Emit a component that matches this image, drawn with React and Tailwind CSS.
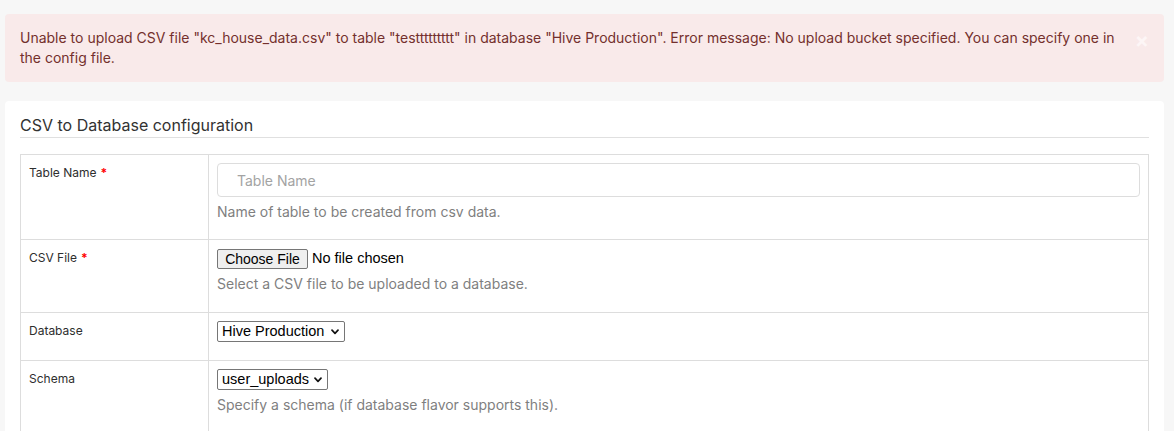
import React from "react";

const Chevron = () => (
  <svg width="8" height="6" viewBox="0 0 8 6" className="shrink-0">
    <path d="M1 1.2 L4 4.3 L7 1.2" fill="none" stroke="#111" strokeWidth="1.7" strokeLinecap="round" strokeLinejoin="round" />
  </svg>
);

const Select = ({ value, width }) => (
  <div
    className={`flex h-[21px] items-center justify-between rounded-[2px] border border-[#767676] bg-white pl-[4px] pr-[5px] font-['Liberation_Sans',Arial,sans-serif] text-[14.5px] leading-none text-black ${width}`}
  >
    <span>{value}</span>
    <Chevron />
  </div>
);

const Label = ({ children, required }) => (
  <div className="w-[188px] shrink-0 border-r border-[#dddddd] p-[8px] text-[12px] leading-[20px] text-[#2e2e2e]">
    {children}
    {required && <span className="ml-[4px] align-top text-[12px] font-bold text-[#ff0000]">*</span>}
  </div>
);

const Help = ({ children }) => (
  <div className="mt-[5px] text-[14px] leading-[20px] text-[#7f7f7f]">{children}</div>
);

export default function App() {
  return (
    <div className="min-h-screen bg-[#f7f7f7] pl-[5px] pr-[10px] pt-[14px] font-['Inter','Noto_Sans',sans-serif]">
      <div className="relative mb-[19px] rounded-[4px] bg-[#f9eaea] py-[14px] pl-[15px] pr-[40px] text-[14px] leading-[20px] text-[#74302d]">
        Unable to upload CSV file "kc_house_data.csv" to table "testtttttttt" in database "Hive Production". Error message: No upload bucket specified. You can specify one in the config file.
        <span className="absolute right-[15px] top-[16px] text-[21px] font-bold leading-none text-[#fdf6f6]">×</span>
      </div>

      <div className="rounded-[4px] bg-white px-[15px] pt-[15px]">
        <div className="box-border h-[22px] border-b border-[#e0e0e0] text-[16px] leading-[19px] text-[#323232]">
          CSV to Database configuration
        </div>

        <div className="mt-[16px] border border-b-0 border-[#dddddd]">
          <div className="flex border-b border-[#dddddd]">
            <Label required>Table Name</Label>
            <div className="flex-1 p-[8px]">
              <div className="mb-[9px]">
                <div className="flex h-[34px] items-center rounded-[4px] border border-[#dddddd] bg-white pl-[19px] text-[14px] text-[#a3a3a3]">
                  Table Name
                </div>
                <Help>Name of table to be created from csv data.</Help>
              </div>
            </div>
          </div>

          <div className="flex border-b border-[#dddddd]">
            <Label required>CSV File</Label>
            <div className="flex-1 p-[8px]">
              <div className="mb-[10px]">
                <div className="flex h-[21px] items-center font-['Liberation_Sans',Arial,sans-serif] text-black">
                  <span className="flex h-[20px] w-[91px] items-center justify-center rounded-[2px] border border-[#767676] bg-[#efefef] text-[14px] leading-none">
                    Choose File
                  </span>
                  <span className="ml-[4px] text-[14.5px] leading-none">No file chosen</span>
                </div>
                <Help>Select a CSV file to be uploaded to a database.</Help>
              </div>
            </div>
          </div>

          <div className="flex border-b border-[#dddddd]">
            <Label>Database</Label>
            <div className="flex-1 p-[8px]">
              <div className="mb-[10px]">
                <Select value="Hive Production" width="w-[128px]" />
              </div>
            </div>
          </div>

          <div className="flex border-b border-[#dddddd]">
            <Label>Schema</Label>
            <div className="flex-1 p-[8px]">
              <div className="mb-[10px]">
                <Select value="user_uploads" width="w-[111px]" />
                <Help>Specify a schema (if database flavor supports this).</Help>
              </div>
            </div>
          </div>
        </div>
      </div>
    </div>
  );
}
